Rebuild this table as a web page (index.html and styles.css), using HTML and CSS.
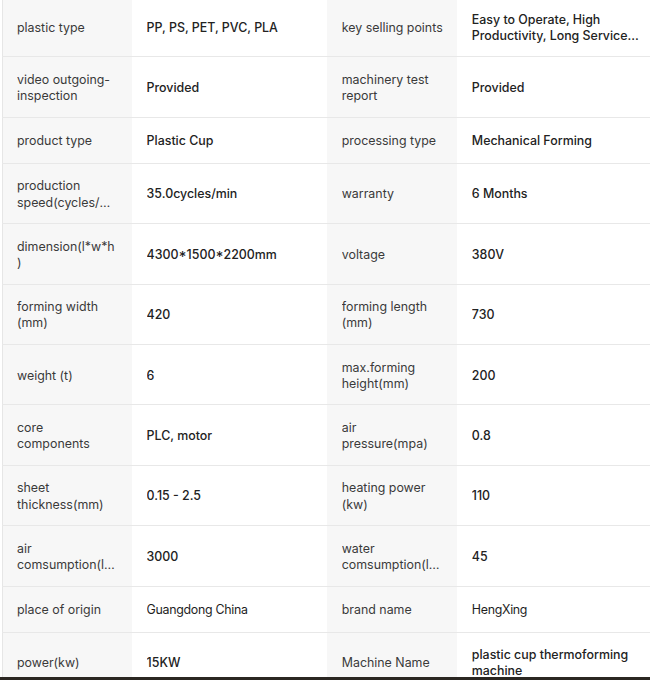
FILE: index.html
```html
<!DOCTYPE html>
<html lang="en">
<head>
  <meta charset="UTF-8" />
  <meta name="viewport" content="width=device-width, initial-scale=1.0"/>
  <title>Product Attributes</title>
  <link rel="stylesheet" href="styles.css">
</head>
<body>

<div class="attrs">
  <table class="attr-table">
    <colgroup>
      <col class="col-first">
      <col class="col-val">
      <col class="col-key">
      <col class="col-val">
    </colgroup>
    <tbody>
      <tr>
        <td class="key"><div class="clamp">plastic type</div></td>
        <td class="val"><div class="clamp">PP, PS, PET, PVC, PLA</div></td>
        <td class="key"><div class="clamp">key selling points</div></td>
        <td class="val"><div class="clamp">Easy to Operate, High Productivity, Long Service Life</div></td>
      </tr>
      <tr>
        <td class="key"><div class="clamp">video outgoing-inspection</div></td>
        <td class="val"><div class="clamp">Provided</div></td>
        <td class="key"><div class="clamp">machinery test report</div></td>
        <td class="val"><div class="clamp">Provided</div></td>
      </tr>
      <tr>
        <td class="key"><div class="clamp">product type</div></td>
        <td class="val"><div class="clamp">Plastic Cup</div></td>
        <td class="key"><div class="clamp">processing type</div></td>
        <td class="val"><div class="clamp">Mechanical Forming</div></td>
      </tr>
      <tr>
        <td class="key"><div class="clamp">production speed(cycles/min)</div></td>
        <td class="val"><div class="clamp">35.0cycles/min</div></td>
        <td class="key"><div class="clamp">warranty</div></td>
        <td class="val"><div class="clamp">6 Months</div></td>
      </tr>
      <tr>
        <td class="key"><div class="clamp">dimension(l*w*h)</div></td>
        <td class="val"><div class="clamp">4300*1500*2200mm</div></td>
        <td class="key"><div class="clamp">voltage</div></td>
        <td class="val"><div class="clamp">380V</div></td>
      </tr>
      <tr>
        <td class="key"><div class="clamp">forming width (mm)</div></td>
        <td class="val"><div class="clamp">420</div></td>
        <td class="key"><div class="clamp">forming length (mm)</div></td>
        <td class="val"><div class="clamp">730</div></td>
      </tr>
      <tr>
        <td class="key"><div class="clamp">weight (t)</div></td>
        <td class="val"><div class="clamp">6</div></td>
        <td class="key"><div class="clamp">max.forming height(mm)</div></td>
        <td class="val"><div class="clamp">200</div></td>
      </tr>
      <tr>
        <td class="key"><div class="clamp">core components</div></td>
        <td class="val"><div class="clamp">PLC, motor</div></td>
        <td class="key"><div class="clamp">air pressure(mpa)</div></td>
        <td class="val"><div class="clamp">0.8</div></td>
      </tr>
      <tr>
        <td class="key"><div class="clamp">sheet thickness(mm)</div></td>
        <td class="val"><div class="clamp">0.15 - 2.5</div></td>
        <td class="key"><div class="clamp">heating power (kw)</div></td>
        <td class="val"><div class="clamp">110</div></td>
      </tr>
      <tr>
        <td class="key"><div class="clamp">air comsumption(l/min)</div></td>
        <td class="val"><div class="clamp">3000</div></td>
        <td class="key"><div class="clamp">water comsumption(l/min)</div></td>
        <td class="val"><div class="clamp">45</div></td>
      </tr>
      <tr>
        <td class="key"><div class="clamp">place of origin</div></td>
        <td class="val plain"><div class="clamp">Guangdong China</div></td>
        <td class="key"><div class="clamp">brand name</div></td>
        <td class="val plain"><div class="clamp">HengXing</div></td>
      </tr>
      <tr>
        <td class="key"><div class="clamp">power(kw)</div></td>
        <td class="val"><div class="clamp">15KW</div></td>
        <td class="key"><div class="clamp">Machine Name</div></td>
        <td class="val"><div class="clamp">plastic cup thermoforming machine</div></td>
      </tr>
    </tbody>
  </table>
</div>

<div class="bottom-bar"></div>

</body>
</html>
```

FILE: styles.css
```css
body {
  margin: 0;
  padding: 0;
  background: #ffffff;
  font-family: Inter, "Noto Sans", sans-serif;
  overflow: hidden;
}

.attrs {
  padding-left: 2px;
  margin-top: -3px;
}

.attr-table {
  width: 650px;
  table-layout: fixed;
  border-collapse: collapse;
  border-left: 1px solid #e6e6e6;
}

.col-first {
  width: 129px;
}

.col-key {
  width: 130px;
}

.col-val {
  width: 195px;
}

.attr-table td {
  padding: 14.5px 14px 12.5px 15px;
  border-bottom: 1px solid #e8e8e8;
  vertical-align: middle;
  font-size: 12.4px;
  line-height: 16.2px;
  height: 18px;
}

.attr-table td:first-child {
  padding-left: 14px;
}

.attr-table td.val {
  padding-right: 9px;
}

.key {
  background: #f7f7f7;
  color: #3a3a3a;
  font-weight: 400;
}

.val {
  background: #ffffff;
  color: #222222;
  font-weight: 500;
}

.val.plain {
  font-weight: 400;
  letter-spacing: -0.3px;
  color: #1e1e1e;
}

.clamp {
  display: -webkit-box;
  -webkit-box-orient: vertical;
  -webkit-line-clamp: 2;
  overflow: hidden;
  overflow-wrap: anywhere;
}

.bottom-bar {
  position: fixed;
  left: 0;
  right: 0;
  bottom: 0;
  height: 3px;
  background: #2b2722;
}
```
